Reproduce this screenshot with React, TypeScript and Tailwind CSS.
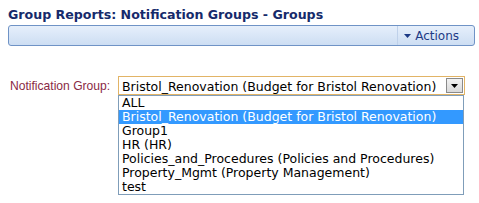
import React from "react";

const items = [
  "ALL",
  "Bristol_Renovation (Budget for Bristol Renovation)",
  "Group1",
  "HR (HR)",
  "Policies_and_Procedures (Policies and Procedures)",
  "Property_Mgmt (Property Management)",
  "test",
];

export default function App() {
  return (
    <div className="w-[479px] h-[203px] bg-white overflow-hidden pl-[8px] pt-[7px] pr-[4px]">
      <div
        className="h-[16px] leading-[16px] text-[12.6px] font-bold text-[#162a6b] whitespace-nowrap"
        style={{ fontFamily: '"DejaVu Sans", Verdana, sans-serif' }}
      >
        Group Reports: Notification Groups - Groups
      </div>
      <div className="mt-[2px] h-[21px] w-[467px] rounded-[3px] border border-[#6f93c6] bg-gradient-to-b from-[#e6effb] to-[#cddef3] flex justify-end">
        <div
          className="flex items-center gap-[4px] border-l border-[#bfd1ea] pl-[6px] pr-[15px] text-[12px] text-[#1c3a86]"
          style={{ fontFamily: '"DejaVu Sans", Verdana, sans-serif' }}
        >
          <svg width="7" height="4" viewBox="0 0 7 4" className="mt-[1px]">
            <polygon points="0,0 7,0 3.5,4" fill="#1c3a86" />
          </svg>
          <span>Actions</span>
        </div>
      </div>
      <div className="mt-[30px] flex items-start pl-[2px]">
        <div
          className="w-[108px] h-[20px] leading-[20px] text-[12.1px] text-[#8a2a45] whitespace-nowrap"
          style={{ fontFamily: '"Liberation Sans", Tahoma, sans-serif' }}
        >
          Notification Group:
        </div>
        <div className="relative" style={{ fontFamily: '"DejaVu Sans", Verdana, sans-serif' }}>
          <div className="w-[347px] h-[19px] border border-[#e2b466] bg-white flex items-center justify-between pl-[3px] pr-[1px]">
            <span className="text-[12.5px] text-black whitespace-nowrap leading-[15px] mt-[1px]">
              Bristol_Renovation (Budget for Bristol Renovation)
            </span>
            <div className="w-[17px] h-[15px] border border-[#8a8a8a] bg-gradient-to-b from-[#f2f2f2] to-[#d9d9d9] flex items-center justify-center">
              <svg width="7" height="4" viewBox="0 0 7 4">
                <polygon points="0,0 7,0 3.5,4" fill="#000" />
              </svg>
            </div>
          </div>
          <div className="absolute left-0 top-[19px] w-[346px] border border-[#7f9db9] bg-white">
            {items.map((it, i) => (
              <div
                key={it}
                className={
                  "h-[14px] leading-[14px] pl-[3px] text-[12.5px] whitespace-nowrap " +
                  (i === 1 ? "bg-[#3399ff] text-white" : "text-black")
                }
              >
                {it}
              </div>
            ))}
          </div>
        </div>
      </div>
    </div>
  );
}
